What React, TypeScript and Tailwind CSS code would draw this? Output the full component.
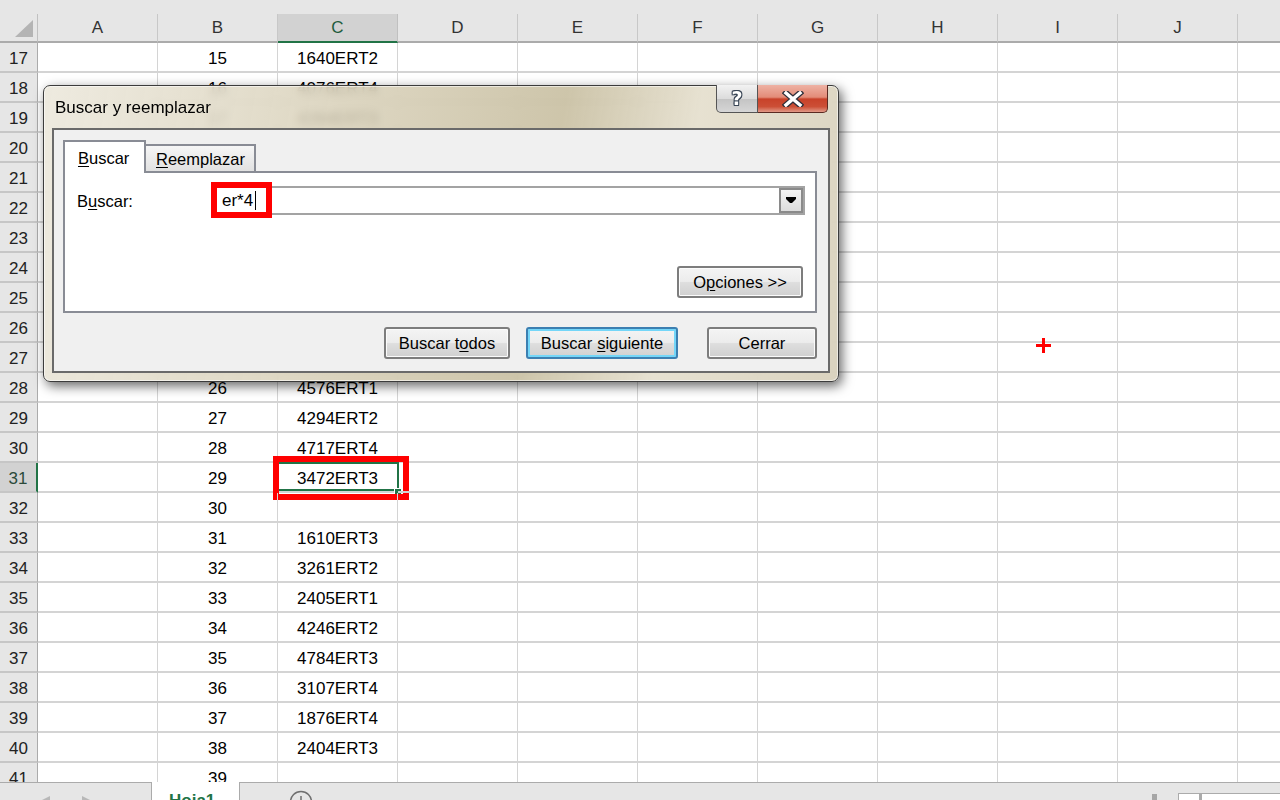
import React from 'react';

interface Fila {
    n: number;
    b?: number;
    c?: string;
}

const columnas = ['A', 'B', 'C', 'D', 'E', 'F', 'G', 'H', 'I', 'J', 'K'];

const filas: Fila[] = [
    { n: 17, b: 15, c: '1640ERT2' },
    { n: 18, b: 16, c: '4076ERT4' },
    { n: 19, b: 17, c: '4264ERT3' },
    { n: 20 },
    { n: 21 },
    { n: 22 },
    { n: 23 },
    { n: 24 },
    { n: 25 },
    { n: 26 },
    { n: 27 },
    { n: 28, b: 26, c: '4576ERT1' },
    { n: 29, b: 27, c: '4294ERT2' },
    { n: 30, b: 28, c: '4717ERT4' },
    { n: 31, b: 29, c: '3472ERT3' },
    { n: 32, b: 30 },
    { n: 33, b: 31, c: '1610ERT3' },
    { n: 34, b: 32, c: '3261ERT2' },
    { n: 35, b: 33, c: '2405ERT1' },
    { n: 36, b: 34, c: '4246ERT2' },
    { n: 37, b: 35, c: '4784ERT3' },
    { n: 38, b: 36, c: '3107ERT4' },
    { n: 39, b: 37, c: '1876ERT4' },
    { n: 40, b: 38, c: '2404ERT3' },
    { n: 41, b: 39 },
];

// botón clásico de Windows 7
const boton =
    'h-[32px] flex items-center justify-center rounded-[3px] border-2 border-[#7d7d7d] bg-[linear-gradient(to_bottom,#f4f4f4_0%,#ececec_48%,#dedede_52%,#d0d0d0_100%)] shadow-[inset_0_0_0_1px_#fbfbfb] text-black';

const FlechaCombo = () => (
    <svg width="10" height="7" viewBox="0 0 10 7">
        <polygon points="0,0 10,0 10,2 6,6 4,6 0,2" fill="#000" />
    </svg>
);

const Dialogo = () => (
    <div className="absolute left-[43px] top-[85px] w-[796px] h-[297px] rounded-[7px] border border-[#3c3c3c] flex flex-col backdrop-blur-[4px] bg-[linear-gradient(100deg,rgba(236,232,220,0.9)_0%,rgba(216,208,184,0.84)_35%,rgba(196,186,154,0.84)_62%,rgba(228,222,204,0.9)_78%,rgba(214,206,184,0.9)_100%)] shadow-[3px_4px_12px_rgba(0,0,0,0.6),inset_0_0_0_1px_rgba(255,255,255,0.55)]">
        <div className="h-[42px] shrink-0 flex justify-between">
            <span className="pl-[11px] pt-[9px] text-[17px] text-black">Buscar y reemplazar</span>
            <div className="flex h-[28px] mr-[10px] -mt-px">
                <div className="w-[42px] h-full flex items-center justify-center rounded-bl-[5px] border border-t-0 border-[#555] bg-[linear-gradient(to_bottom,#f2f2f2_0%,#dcdcdc_50%,#c4c4c4_52%,#d6d6d6_100%)]">
                    <span className="font-['DejaVu_Sans',sans-serif] text-[19px] font-bold leading-none text-white [text-shadow:1px_0_#3a4656,-1px_0_#3a4656,0_1px_#3a4656,0_-1px_#3a4656,1px_1px_#3a4656,-1px_-1px_#3a4656,1px_-1px_#3a4656,-1px_1px_#3a4656]">
                        ?
                    </span>
                </div>
                <div className="w-[70px] h-full flex items-center justify-center rounded-br-[5px] border border-t-0 border-l-0 border-[#5a2a22] bg-[linear-gradient(to_bottom,#eeb2a4_0%,#e38c78_45%,#c8422a_52%,#cc4f36_80%,#e29a88_100%)]">
                    <svg width="22" height="16" viewBox="0 0 22 16">
                        <path d="M4 2 L18 14 M18 2 L4 14" stroke="#2f2f3a" strokeWidth="6" strokeLinecap="square" />
                        <path d="M4 2 L18 14 M18 2 L4 14" stroke="#ffffff" strokeWidth="3.4" strokeLinecap="square" />
                    </svg>
                </div>
            </div>
        </div>

        <div className="ml-[8px] mr-[8px] mb-[8px] flex-1 border-2 border-[#6a6a6a] bg-[#f0f0f0] flex flex-col pl-[9px] pt-[10px] pr-[11px] text-[16.5px] text-black">
            <div className="h-[31px] flex items-end shrink-0">
                <div className="relative z-10 w-[83px] h-[33px] -mb-[2px] bg-white border-2 border-b-0 border-[#898c95] pl-[13px] pt-[4px]">
                    <span className="underline underline-offset-2">B</span>uscar
                </div>
                <div className="w-[110px] h-[27px] flex items-center pl-[10px] pt-[2px] border-2 border-b-0 border-l-0 border-[#898c95] bg-[linear-gradient(to_bottom,#f6f6f6,#e1e1e1)]">
                    <span className="underline underline-offset-2">R</span>eemplazar
                </div>
            </div>

            <div className="h-[142px] shrink-0 border-2 border-[#898c95] bg-white flex flex-col pl-[12px] pr-[10px] pt-[13px] pb-[13px]">
                <div className="flex items-center h-[29px]">
                    <span className="w-[134px] shrink-0 pt-[2px]">
                        B<span className="underline underline-offset-2">u</span>scar:
                    </span>
                    <div className="relative flex-1 h-full flex items-center border-2 border-[#a3a3a3] pl-[9px]">
                        <span className="text-[17px]">er*4</span>
                        <span className="w-px h-[19px] bg-black ml-[2px]" />
                        <div className="ml-auto w-[24px] h-full flex items-center justify-center border-2 border-[#8a8a8a] bg-[linear-gradient(to_bottom,#f3f3f3,#dcdcdc)]">
                            <FlechaCombo />
                        </div>
                        <div className="absolute left-[-2px] top-[-6px] w-[61px] h-[36px] border-[6px] border-[#ff0000]" />
                    </div>
                </div>
                <div className={`${boton} mt-auto self-end w-[126px] mr-[2px]`}>
                    O<span className="underline underline-offset-2">p</span>ciones &gt;&gt;
                </div>
            </div>

            <div className="mt-[14px] flex justify-end shrink-0">
                <div className={`${boton} w-[126px]`}>
                    Buscar t<span className="underline underline-offset-2">o</span>dos
                </div>
                <div className="ml-[16px] w-[152px] h-[32px] flex items-center justify-center rounded-[3px] border-2 border-[#3c7fb1] bg-[linear-gradient(to_bottom,#f4f4f4_0%,#ececec_48%,#dedede_52%,#d0d0d0_100%)] shadow-[inset_0_0_0_2px_#74d6f8] text-black">
                    Buscar <span className="underline underline-offset-2 ml-[5px]">s</span>iguiente
                </div>
                <div className={`${boton} ml-[29px] w-[110px]`}>Cerrar</div>
            </div>
        </div>
    </div>
);

const App = () => {
    return (
        <div className="relative w-[1280px] h-[800px] overflow-hidden bg-white flex flex-col font-['Liberation_Sans',Arial,sans-serif] text-[17px] text-black">
            <div className="h-[14px] shrink-0 bg-[#e6e6e6]" />

            {/* encabezado de columnas */}
            <div className="flex h-[29px] shrink-0 bg-[#e6e6e6] text-[#333]">
                <div className="w-[38px] shrink-0 flex items-end justify-end pr-[4px] pb-[4px] border-r border-r-[#c0c0c0] border-b-2 border-b-[#ababab]">
                    <svg width="18" height="17" viewBox="0 0 18 17">
                        <polygon points="18,0 18,17 0,17" fill="#b4b4b4" />
                    </svg>
                </div>
                {columnas.map((col) => (
                    <div
                        key={col}
                        className={
                            col === 'C'
                                ? 'w-[120px] shrink-0 flex items-center justify-center pt-[1px] bg-[#d2d2d2] border-r border-r-[#c0c0c0] border-b-2 border-b-[#217346] text-[#1f5c3c]'
                                : 'w-[120px] shrink-0 flex items-center justify-center pt-[1px] border-r border-r-[#c8c8c8] border-b-2 border-b-[#ababab]'
                        }
                    >
                        {col === 'K' ? null : col}
                    </div>
                ))}
            </div>

            {/* celdas */}
            <div className="flex-1 overflow-hidden">
                {filas.map((f) => {
                    const activa = f.n === 31;
                    return (
                        <div key={f.n} className="flex h-[30px]">
                            <div
                                className={
                                    activa
                                        ? 'w-[38px] shrink-0 flex items-center justify-center pt-[4px] bg-[#d2d2d2] border-r-2 border-r-[#217346] border-b-2 border-b-[#c6c6c6] text-[#2b4a3a]'
                                        : 'w-[38px] shrink-0 flex items-center justify-center pt-[4px] bg-[#e6e6e6] border-r border-r-[#ababab] border-b-2 border-b-[#c6c6c6] text-[#222]'
                                }
                            >
                                {f.n}
                            </div>
                            {columnas.map((col) => (
                                <div
                                    key={col}
                                    className="relative w-[120px] shrink-0 flex items-center justify-center pt-[4px] border-r border-b-2 border-[#d4d4d4]"
                                >
                                    {col === 'B' ? f.b : col === 'C' ? f.c : null}
                                    {activa && col === 'C' && (
                                        <>
                                            <div className="absolute left-[-1px] top-[-1px] right-[-2px] bottom-0 border-2 border-[#217346]" />
                                            <div className="absolute left-[116px] top-[25px] w-[8px] h-[7px] bg-[#217346] border border-white" />
                                            <div className="absolute left-[-5px] top-[-7px] w-[136px] h-[44px] border-[6px] border-[#ff0000]" />
                                        </>
                                    )}
                                </div>
                            ))}
                        </div>
                    );
                })}
            </div>

            {/* pestañas de hojas */}
            <div className="h-[18px] shrink-0 flex bg-[#e6e6e6]">
                <div className="w-[152px] shrink-0 flex items-start border-t border-r border-[#ababab]">
                    <svg className="ml-[42px] mt-[13px]" width="8" height="8" viewBox="0 0 8 8">
                        <polygon points="0,4 8,0 8,8" fill="#b8b8b8" />
                    </svg>
                    <svg className="ml-[32px] mt-[13px]" width="8" height="8" viewBox="0 0 8 8">
                        <polygon points="8,4 0,0 0,8" fill="#b8b8b8" />
                    </svg>
                </div>
                <div className="w-[88px] shrink-0 bg-white border-r border-[#ababab] pl-[17px] pt-[9px] text-[17px] font-bold text-[#217346] leading-[20px]">
                    <span className="underline">Hoja1</span>
                </div>
                <div className="flex-1 flex border-t border-[#ababab]">
                    <svg className="ml-[49px] mt-[7px] shrink-0" width="24" height="24" viewBox="0 0 24 24">
                        <circle cx="12" cy="12" r="10.5" fill="none" stroke="#6f6f6f" strokeWidth="1.5" />
                        <path d="M12 6 V18 M6 12 H18" stroke="#6f6f6f" strokeWidth="1.5" />
                    </svg>
                    <div className="ml-auto flex">
                        <div className="w-[5px] h-[6px] mt-[11px] bg-[#a6a6a6]" />
                        <div className="ml-[21px] mt-[10px] w-[22px] h-[10px] bg-white border border-[#ababab] border-b-0" />
                        <div className="mt-[10px] w-[80px] h-[10px] bg-white border-t border-l-2 border-[#ababab]" />
                    </div>
                </div>
            </div>

            <Dialogo />

            {/* cursor en cruz */}
            <svg className="absolute left-[1036px] top-[338px]" width="15" height="15" viewBox="0 0 15 15">
                <rect x="0" y="6" width="15" height="3" fill="#ff0000" />
                <rect x="6" y="0" width="3" height="15" fill="#ff0000" />
            </svg>
        </div>
    );
};

export default App;
